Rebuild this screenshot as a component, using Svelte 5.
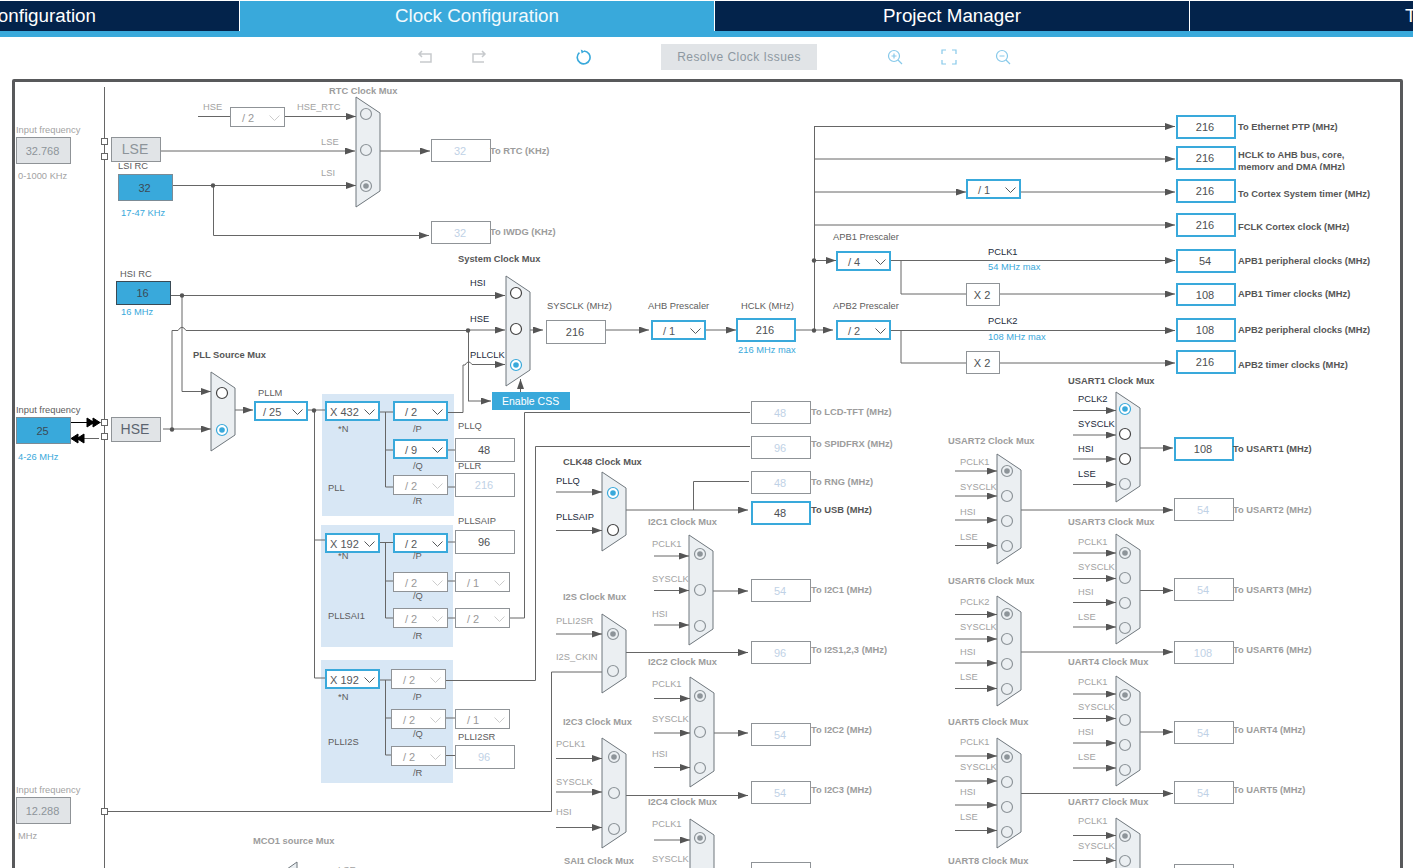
<script>
  const tabs = ['Pinout & Configuration', 'Clock Configuration', 'Project Manager', 'Tools']

  // page coordinates: x, y, w, h, text, kind
  const boxes = [
    [16, 137, 55, 27, '32.768', 'off'], [16, 797, 55, 27, '12.288', 'off'],
    [111, 137, 50, 25, 'LSE', 'off big'], [111, 417, 50, 25, 'HSE', 'off big dark'],
    [118, 174, 55, 27, '32', 'fill'], [116, 281, 55, 24, '16', 'fill dk'], [16, 417, 55, 27, '25', 'fill'],
    [431, 139, 60, 23, '32', 'dis'], [431, 221, 60, 23, '32', 'dis'],
    [546, 320, 60, 24, '216', 'plain'], [736, 318, 60, 24, '216', 'on'],
    [966, 283, 34, 23, 'X 2', 'plain'], [966, 351, 34, 23, 'X 2', 'plain'],
    [1176, 115, 60, 24, '216', 'on'], [1176, 146, 60, 24, '216', 'on'], [1176, 179, 60, 24, '216', 'on'],
    [1176, 213, 60, 24, '216', 'on'], [1176, 249, 60, 24, '54', 'on'], [1176, 283, 60, 23, '108', 'on'],
    [1176, 318, 60, 24, '108', 'on'], [1176, 350, 60, 24, '216', 'on'],
    [455, 438, 60, 24, '48', 'plain'], [455, 473, 60, 24, '216', 'dis'],
    [455, 530, 60, 24, '96', 'plain'], [455, 745, 60, 24, '96', 'dis'],
    [751, 401, 60, 23, '48', 'dis'], [751, 436, 60, 23, '96', 'dis'], [751, 471, 60, 23, '48', 'dis'],
    [751, 501, 60, 24, '48', 'on'], [751, 579, 60, 23, '54', 'dis'], [751, 641, 60, 23, '96', 'dis'],
    [751, 723, 60, 23, '54', 'dis'], [751, 781, 60, 23, '54', 'dis'], [751, 862, 60, 23, '', 'dis'],
    [1174, 437, 60, 24, '108', 'on'], [1174, 498, 60, 23, '54', 'dis'], [1174, 578, 60, 23, '54', 'dis'],
    [1174, 641, 60, 23, '108', 'dis'], [1174, 721, 60, 23, '54', 'dis'], [1174, 781, 60, 23, '54', 'dis'],
    [1174, 864, 60, 23, '', 'dis']
  ]

  // x, y, w, text, active
  const selects = [
    [230, 107, 55, '/ 2', false], [254, 401, 54, '/ 25', true], [651, 320, 55, '/ 1', true],
    [836, 251, 55, '/ 4', true], [836, 320, 55, '/ 2', true], [966, 179, 55, '/ 1', true],
    [325, 401, 55, 'X 432', true], [393, 401, 55, '/ 2', true], [393, 439, 55, '/ 9', true], [393, 475, 55, '/ 2', false],
    [325, 533, 55, 'X 192', true], [393, 533, 55, '/ 2', true], [393, 572, 55, '/ 2', false], [393, 608, 55, '/ 2', false],
    [455, 572, 55, '/ 1', false], [455, 608, 55, '/ 2', false],
    [325, 669, 55, 'X 192', true], [391, 669, 55, '/ 2', false], [391, 709, 55, '/ 2', false], [391, 746, 55, '/ 2', false],
    [455, 709, 55, '/ 1', false]
  ]

  // x, center y, text, class
  const labels = [
    [16, 130, 'Input frequency', 'g'], [18, 176, '0-1000 KHz', 'g'], [121, 213, '17-47 KHz', 'b'], [118, 166, 'LSI RC', 'd'],
    [120, 274, 'HSI RC', 'd'], [121, 312, '16 MHz', 'b'], [16, 410, 'Input frequency', 'd'], [18, 457, '4-26 MHz', 'b'],
    [16, 790, 'Input frequency', 'g'], [18, 836, 'MHz', 'g'],
    [203, 107, 'HSE', 'g'], [297, 107, 'HSE_RTC', 'g'], [321, 142, 'LSE', 'g'], [321, 173, 'LSI', 'g'],
    [490, 151, 'To RTC (KHz)', 'tg'], [490, 232, 'To IWDG (KHz)', 'tg'],
    [470, 283, 'HSI', 'k'], [470, 319, 'HSE', 'k'], [470, 355, 'PLLCLK', 'k'],
    [258, 393, 'PLLM', 'd'], [338, 429, '*N', 'd'], [413, 429, '/P', 'd'], [413, 466, '/Q', 'd'], [413, 501, '/R', 'd'], [328, 488, 'PLL', 'd'],
    [338, 556, '*N', 'd'], [413, 556, '/P', 'd'], [413, 596, '/Q', 'd'], [413, 636, '/R', 'd'], [328, 616, 'PLLSAI1', 'd'],
    [338, 697, '*N', 'd'], [413, 697, '/P', 'd'], [413, 734, '/Q', 'd'], [413, 773, '/R', 'd'], [328, 742, 'PLLI2S', 'd'],
    [458, 426, 'PLLQ', 'd'], [458, 466, 'PLLR', 'd'], [458, 521, 'PLLSAIP', 'd'], [458, 737, 'PLLI2SR', 'd'],
    [547, 306, 'SYSCLK (MHz)', 'd'], [648, 306, 'AHB Prescaler', 'd'], [741, 306, 'HCLK (MHz)', 'd'], [833, 306, 'APB2 Prescaler', 'd'],
    [833, 237, 'APB1 Prescaler', 'd'], [738, 350, '216 MHz max', 'b'],
    [988, 252, 'PCLK1', 'k'], [988, 267, '54 MHz max', 'b'], [988, 321, 'PCLK2', 'k'], [988, 337, '108 MHz max', 'b'],
    [1238, 127, 'To Ethernet PTP (MHz)', 'td'], [1238, 155, 'HCLK to AHB bus, core,', 'td'],
    [1238, 194, 'To Cortex System timer (MHz)', 'td'], [1238, 227, 'FCLK Cortex clock (MHz)', 'td'],
    [1238, 261, 'APB1 peripheral clocks (MHz)', 'td'], [1238, 294, 'APB1 Timer clocks (MHz)', 'td'],
    [1238, 330, 'APB2 peripheral clocks (MHz)', 'td'], [1238, 365, 'APB2 timer clocks (MHz)', 'td'],
    [811, 412, 'To LCD-TFT (MHz)', 'tg'], [811, 444, 'To SPIDFRX (MHz)', 'tg'], [811, 482, 'To RNG (MHz)', 'tg'], [811, 510, 'To USB (MHz)', 'td'],
    [811, 590, 'To I2C1 (MHz)', 'tg'], [811, 650, 'To I2S1,2,3 (MHz)', 'tg'], [811, 730, 'To I2C2 (MHz)', 'tg'], [811, 790, 'To I2C3 (MHz)', 'tg'],
    [1233, 449, 'To USART1 (MHz)', 'td'], [1233, 510, 'To USART2 (MHz)', 'tg'], [1233, 590, 'To USART3 (MHz)', 'tg'],
    [1233, 650, 'To USART6 (MHz)', 'tg'], [1233, 730, 'To UART4 (MHz)', 'tg'], [1233, 790, 'To UART5 (MHz)', 'tg'],
    [253, 841, 'MCO1 source Mux', 'tg'], [564, 861, 'SAI1 Clock Mux', 'tg'], [948, 861, 'UART8 Clock Mux', 'tg'], [338, 870, 'LSE', 'g']
  ]

  // a radio state is 0 empty, 1 selected blue, 2 selected grey, 3 empty grey
  const muxes = [
    { t: 'RTC Clock Mux', tx: 329, ty: 91, x: 356, top: 97, h: 110, cx: 366, r: [[114, 3], [150, 3], [186, 2]] },
    { t: 'System Clock Mux', dark: true, tx: 458, ty: 259, x: 506, top: 276, h: 110, cx: 516, r: [[293, 0], [329, 0], [365, 1]] },
    { t: 'PLL Source Mux', dark: true, tx: 193, ty: 355, x: 211, top: 372, h: 79, cx: 222, r: [[393, 0], [430, 1]] },
    { t: 'CLK48 Clock Mux', dark: true, tx: 563, ty: 462, x: 602, top: 472, h: 79, cx: 613, r: [[493, 1], [530, 0]],
      lx: 556, wx: 556, inp: [['PLLQ', 481, 492], ['PLLSAIP', 517, 530.5]] },
    { t: 'I2S Clock Mux', tx: 563, ty: 597, x: 602, top: 614, h: 79, cx: 613, r: [[634, 2], [671, 3]],
      lx: 556, wx: 556, inp: [['PLLI2SR', 621, 634], ['I2S_CKIN', 657, 0]] },
    { t: 'I2C1 Clock Mux', tx: 648, ty: 522, x: 689, top: 535, h: 110, cx: 700, r: [[554, 2], [590, 3], [626, 3]],
      lx: 652, wx: 654, inp: [['PCLK1', 544, 556], ['SYSCLK', 579, 590.5], ['HSI', 614, 625]] },
    { t: 'I2C2 Clock Mux', tx: 648, ty: 662, x: 690, top: 677, h: 110, cx: 700, r: [[696, 2], [732, 3], [768, 3]],
      lx: 652, wx: 654, inp: [['PCLK1', 684, 698.5], ['SYSCLK', 719, 733], ['HSI', 754, 767.5]] },
    { t: 'I2C3 Clock Mux', tx: 563, ty: 722, x: 602, top: 738, h: 110, cx: 614, r: [[757, 2], [793, 3], [829, 3]],
      lx: 556, wx: 556, inp: [['PCLK1', 744, 758.5], ['SYSCLK', 782, 792], ['HSI', 812, 827.5]] },
    { t: 'I2C4 Clock Mux', tx: 648, ty: 802, x: 690, top: 819, h: 110, cx: 700, r: [[838, 2], [874, 3]],
      lx: 652, wx: 654, inp: [['PCLK1', 824, 840], ['SYSCLK', 859, 875]] },
    { t: 'USART1 Clock Mux', dark: true, tx: 1068, ty: 381, x: 1116, top: 392, h: 110, cx: 1125, r: [[409, 1], [434, 0], [459, 0], [484, 3]],
      lx: 1078, wx: 1073, inp: [['PCLK2', 399, 410.5], ['SYSCLK', 424, 435], ['HSI', 449, 459], ['LSE', 474, 484.5]] },
    { t: 'USART2 Clock Mux', tx: 948, ty: 441, x: 997, top: 454, h: 110, cx: 1007, r: [[471, 2], [496, 3], [521, 3], [546, 3]],
      lx: 960, wx: 955, inp: [['PCLK1', 462, 471], ['SYSCLK', 487, 496], ['HSI', 512, 520], ['LSE', 537, 545.5]] },
    { t: 'USART3 Clock Mux', tx: 1068, ty: 522, x: 1116, top: 534, h: 110, cx: 1125, r: [[553, 2], [578, 3], [603, 3], [628, 3]],
      lx: 1078, wx: 1073, inp: [['PCLK1', 542, 553], ['SYSCLK', 567, 578.5], ['HSI', 592, 602.5], ['LSE', 617, 627]] },
    { t: 'USART6 Clock Mux', tx: 948, ty: 581, x: 997, top: 596, h: 110, cx: 1007, r: [[614, 2], [639, 3], [664, 3], [689, 3]],
      lx: 960, wx: 955, inp: [['PCLK2', 602, 614.5], ['SYSCLK', 627, 639], ['HSI', 652, 663], ['LSE', 677, 688.5]] },
    { t: 'UART4 Clock Mux', tx: 1068, ty: 662, x: 1116, top: 676, h: 110, cx: 1125, r: [[695, 2], [720, 3], [745, 3], [770, 3]],
      lx: 1078, wx: 1073, inp: [['PCLK1', 682, 694], ['SYSCLK', 707, 718.5], ['HSI', 732, 743], ['LSE', 757, 768]] },
    { t: 'UART5 Clock Mux', tx: 948, ty: 722, x: 997, top: 738, h: 110, cx: 1007, r: [[757, 2], [782, 3], [807, 3], [832, 3]],
      lx: 960, wx: 955, inp: [['PCLK1', 742, 756], ['SYSCLK', 767, 781], ['HSI', 792, 805], ['LSE', 817, 830.5]] },
    { t: 'UART7 Clock Mux', tx: 1068, ty: 802, x: 1116, top: 818, h: 110, cx: 1125, r: [[836, 2], [861, 3]],
      lx: 1078, wx: 1073, inp: [['PCLK1', 821, 835.5], ['SYSCLK', 846, 860.5]] }
  ]

  const wires = [
    'M104.5 87V868', 'M198 116.5H230',
    'M106 422.5H90', 'M74 438.5H99',
    'M814.5 126.5V330', 'M901 260V294H966', 'M901 330V363H966',
    'M182 295.5V391.5H205', 'M172 429V330.5H178Q182 324 186 330.5H468',
    'M314.5 410V678H325', 'M314 540H325', 'M308 410H325',
    'M380 412H393', 'M385.5 412V487H393', 'M385 450H393', 'M448 450H455', 'M448 487H455',
    'M380 542.5H393', 'M385.5 542V618H393', 'M385 581H393', 'M448 542H455', 'M448 581H455', 'M448 618H455',
    'M380 680H391', 'M385.5 680V755H391', 'M385 718H391', 'M446 718H455', 'M446 755.5H455',
    'M510 618H524.5V412.5H750', 'M446 680.5H535.5V446.5H750',
    'M108 811.5H551.5V672H602', 'M693.5 510V481.5H749', 'M468.5 330V401'
  ]
  const arrows = [
    'M285 116.5H356', 'M161 151H355', 'M173 185.5H356', 'M213.5 185V235.5H429', 'M380 151H430',
    'M171 295.5H505', 'M468 330H505', 'M182 391.5H211', 'M163 429H211', 'M235 410H253',
    'M448 412.5H463V365H465Q468.5 359 472 364.5H505', 'M468 401H491', 'M520.5 392V379',
    'M530 330H543', 'M606 330H649', 'M706 330H736', 'M796 330H833', 'M814 260.5H836',
    'M814 126.5H1175', 'M814 159H1175', 'M814 192H966', 'M1021 192H1175', 'M814 225H1175',
    'M891 260.5H1175', 'M1000 294H1175', 'M891 330.5H1175', 'M1000 363H1175',
    'M626 510H748', 'M712 591H748', 'M626 652.5H748', 'M712 733H748', 'M626 795.5H748',
    'M1139 448H1173', 'M1021 510H1173', 'M1139 590.5H1173', 'M1021 652H1173', 'M1139 732H1173', 'M1021 793.5H1173'
  ]
  const dots = [[213, 185], [182, 295], [172, 429], [468, 330], [314, 410], [814, 260], [814, 330]]
  const ports = [[104, 141], [104, 156], [104, 422], [104, 436], [104, 811]]

  const poly = (m) => `${m.x},${m.top} ${m.x + 24},${m.top + 16} ${m.x + 24},${m.top + m.h - 16} ${m.x},${m.top + m.h}`
</script>

<div class="page">
  <nav class="tabs">
    {#each tabs as tab, i}
      <div class="tab" class:active={i === 1}>{tab}</div>
    {/each}
  </nav>

  <div class="toolbar">
    <svg class="ico" width="16" height="16" viewBox="0 0 16 16"><path d="M5 2L2 5L5 8M2 5H14V13H3" /></svg>
    <svg class="ico gap" width="16" height="16" viewBox="0 0 16 16"><path d="M11 2L14 5L11 8M14 5H2V13H13" /></svg>
    <svg class="ico blue refresh" width="16" height="16" viewBox="0 0 16 16">
      <path d="M3.4 3.6A6.4 6.4 0 1 0 8 2" stroke-width="1.6" /><path class="solid" d="M8.6 2.4L4.8 0.6L5.6 4.4Z" />
    </svg>
    <div class="resolve">Resolve Clock Issues</div>
    <svg class="ico pale zoomin" width="16" height="16" viewBox="0 0 16 16">
      <circle cx="7" cy="7" r="5.5" /><path d="M11 11L15 15M4.5 7H9.5M7 4.5V9.5" />
    </svg>
    <svg class="ico pale fit" width="16" height="16" viewBox="0 0 16 16">
      <path d="M1 5V1H5M11 1H15V5M15 11V15H11M5 15H1V11" />
    </svg>
    <svg class="ico pale zoomout" width="16" height="16" viewBox="0 0 16 16">
      <circle cx="7" cy="7" r="5.5" /><path d="M11 11L15 15M4.5 7H9.5" />
    </svg>
  </div>

  <section class="frame">
    <div class="diagram">
      <div class="block" style="left:322px;top:394px;width:132px;height:122px"></div>
      <div class="block" style="left:321px;top:525px;width:132px;height:122px"></div>
      <div class="block" style="left:321px;top:660px;width:132px;height:123px"></div>

      <svg class="wires" width="1413" height="868">
        <defs>
          <marker id="tip" viewBox="0 0 10 7" refX="10" refY="3.5" markerWidth="10" markerHeight="7" markerUnits="userSpaceOnUse" orient="auto">
            <path d="M0 0L10 3.5L0 7Z" fill="#555" />
          </marker>
        </defs>
        {#each wires as d}<path {d} class="wire" />{/each}
        {#each arrows as d}<path {d} class="wire" marker-end="url(#tip)" />{/each}

        <path class="black" d="M87 418L94 422.5L87 427ZM93 418L100 422.5L93 427ZM71 422.5H88" />
        <path class="black" d="M78 434L71 438.5L78 443ZM84 434L77 438.5L84 443Z" />

        {#each muxes as m}
          <polygon class="mux" points={poly(m)} />
          {#each m.r as [cy, s]}
            <circle cx={m.cx} {cy} r="5.5" class="radio s{s}" />
            {#if s === 1 || s === 2}<circle cx={m.cx} {cy} r="2.8" class="pip s{s}" />{/if}
          {/each}
          {#each m.inp ?? [] as [, , wy]}
            {#if wy}<path d="M{m.wx} {wy}H{m.x}" class="wire" marker-end="url(#tip)" />{/if}
          {/each}
        {/each}
        <polygon class="mux" points="297,862 280,874 280,890 297,890" />

        {#each dots as [cx, cy]}<circle {cx} cy={cy + 0.5} r="2.2" fill="#555" />{/each}
        {#each ports as [x, y]}<rect x={x - 2.5} y={y - 2.5} width="6" height="6" class="port" />{/each}
      </svg>

      {#each boxes as [x, y, w, h, text, kind]}
        <div class="box {kind}" style="left:{x}px;top:{y}px;width:{w}px;height:{h}px">{text}</div>
      {/each}

      {#each selects as [x, y, w, text, on]}
        <div class="select" class:on class:mul={text[0] === 'X'} class:wide={text === '/ 25'} style="left:{x}px;top:{y}px;width:{w}px">
          <span>{text}</span>
          <svg width="11" height="6" viewBox="0 0 11 6"><path d="M0.5 0.5L5.5 5.5L10.5 0.5" /></svg>
        </div>
      {/each}

      {#each muxes as m}
        <div class="lbl {m.dark ? 'td' : 'tg'}" style="left:{m.tx}px;top:{m.ty - 6}px">{m.t}</div>
        {#each m.inp ?? [] as [name, ly]}
          <div class="lbl {m.dark ? 'k' : 'g'}" style="left:{m.lx}px;top:{ly - 6}px">{name}</div>
        {/each}
      {/each}

      {#each labels as [x, y, text, cls]}
        <div class="lbl {cls}" style="left:{x}px;top:{y - 6}px">{text}</div>
      {/each}
      <div class="lbl td clip" style="left:1238px;top:161px">memory and DMA (MHz)</div>

      <div class="css">Enable CSS</div>
    </div>
  </section>
</div>

<style>
  :global(body) {
    margin: 0;
    background: #fff;
  }

  .page {
    width: 1413px;
    height: 868px;
    overflow: hidden;
    font-family: 'Liberation Sans', Arial, sans-serif;
  }

  .tabs {
    display: flex;
    margin-top: 1px;
    margin-left: -235px;
    width: 1900px;
    height: 30px;
    background: #03234b;
    border-bottom: 6px solid #39a9db;
  }

  .tab {
    flex: 0 0 475px;
    box-sizing: border-box;
    display: flex;
    align-items: center;
    justify-content: center;
    color: #fff;
    font-size: 18.8px;
    border-right: 1px solid #fff;
  }

  .tab.active {
    background: #39a9db;
    color: #f2fafd;
  }

  .toolbar {
    display: flex;
    align-items: center;
    box-sizing: border-box;
    height: 42px;
    padding: 0 0 2px 417px;
  }

  .ico {
    fill: none;
    stroke: #c7cacd;
    stroke-width: 1.5;
    flex: none;
  }

  .gap {
    margin-left: 38px;
  }

  .blue {
    stroke: #39a9db;
  }

  .blue .solid {
    fill: #39a9db;
    stroke: none;
  }

  .pale {
    stroke: #87c9ea;
    stroke-width: 1.2;
  }

  .refresh {
    margin-left: 89px;
  }

  .resolve {
    width: 156px;
    height: 26px;
    margin-left: 69px;
    background: #e1e4e7;
    color: #8d98a1;
    font-size: 12px;
    letter-spacing: 0.45px;
    display: flex;
    align-items: center;
    justify-content: center;
  }

  .zoomin {
    margin-left: 70px;
  }

  .fit,
  .zoomout {
    margin-left: 38px;
  }

  .frame {
    position: relative;
    box-sizing: border-box;
    width: 1391px;
    height: 800px;
    margin-left: 12px;
    border: 3px solid #58595b;
    border-radius: 2px;
  }

  .diagram {
    position: absolute;
    left: -15px;
    top: -82px;
    width: 1413px;
    height: 868px;
  }

  .block {
    position: absolute;
    background: #d8e7f5;
  }

  .wires {
    position: absolute;
    left: 0;
    top: 0;
  }

  .wire {
    fill: none;
    stroke: #666;
    stroke-width: 1;
  }

  .black {
    fill: #000;
    stroke: #000;
    stroke-width: 1;
  }

  .mux {
    fill: #ebeff2;
    stroke: #6f777d;
    stroke-width: 1;
  }

  .radio {
    fill: #fff;
    stroke: #444;
    stroke-width: 1.2;
  }

  .radio.s1 {
    stroke: #39a9db;
  }

  .radio.s2,
  .radio.s3 {
    fill: #ebeff2;
    stroke: #8d9499;
  }

  .pip.s1 {
    fill: #39a9db;
  }

  .pip.s2 {
    fill: #8d9499;
  }

  .port {
    fill: #fff;
    stroke: #666;
  }

  .box {
    position: absolute;
    box-sizing: border-box;
    display: flex;
    align-items: center;
    justify-content: center;
    padding-right: 2px;
    font-size: 11px;
    background: #fff;
    border: 1px solid #8f9397;
    color: #4c4f52;
  }

  .off {
    background: #e1e4e7;
    color: #8d949a;
  }

  .big {
    font-size: 14px;
    padding-bottom: 2px;
  }

  .dark {
    color: #5c6470;
  }

  .fill {
    background: #39a9db;
    border-color: #7c8b95;
    color: #3c4a55;
  }

  .dk {
    border-color: #3a4a55;
  }

  .dis {
    color: #bfd2e6;
  }

  .on {
    border: 2px solid #39a9db;
  }

  .select {
    position: absolute;
    box-sizing: border-box;
    display: flex;
    align-items: center;
    justify-content: space-between;
    height: 20px;
    padding: 1px 4px 0 11px;
    font-size: 11px;
    background: #fff;
    border: 1px solid #8f9397;
    color: #999;
  }

  .select svg {
    fill: none;
    stroke: #ccc;
  }

  .select.on {
    border: 2px solid #39a9db;
    padding: 1px 3px 0 10px;
    color: #55585b;
  }

  .select.on svg {
    stroke: #55585b;
  }

  .select.mul {
    padding-left: 3px;
  }

  .select.wide {
    padding-left: 7px;
  }

  .lbl {
    position: absolute;
    line-height: 12px;
    font-size: 9.33px;
    white-space: nowrap;
  }

  .g {
    color: #a3a3a3;
  }

  .d {
    color: #5d5d5d;
  }

  .k {
    color: #1c2b3c;
  }

  .b {
    color: #39a9db;
  }

  .tg {
    font-weight: 700;
    color: #9c9c9c;
  }

  .td {
    font-weight: 700;
    color: #565656;
  }

  .clip {
    height: 9px;
    overflow: hidden;
  }

  .css {
    position: absolute;
    left: 492px;
    top: 392px;
    width: 78px;
    height: 18px;
    padding-left: 10px;
    box-sizing: border-box;
    background: #39a9db;
    color: #fff;
    font-size: 10.5px;
    line-height: 18px;
  }
</style>
